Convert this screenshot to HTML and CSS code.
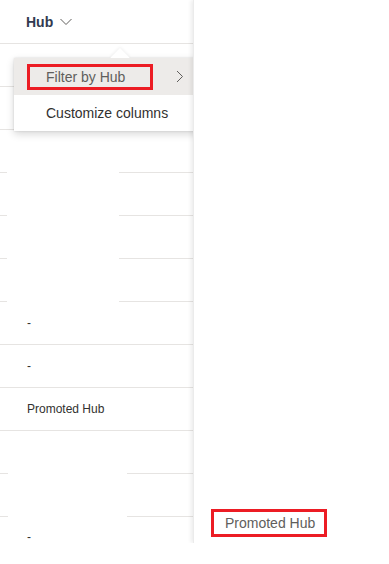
FILE: index.html
```html
<!DOCTYPE html>
<html lang="en">
<head>
    <meta charset="UTF-8">
    <meta name="viewport" content="width=device-width, initial-scale=1.0">
    <title>Hub column</title>
    <link rel="stylesheet" href="styles.css">
</head>
<body>
    <div class="page">
        <div class="list">
            <div class="head">
                <span class="title">Hub</span>
                <svg class="down" width="12" height="8" viewBox="0 0 12 8"><path d="M0.5 1 L6 6.5 L11.5 1" fill="none" stroke="#605e5c" stroke-width="1"/></svg>
            </div>
            <div class="row"></div>
            <div class="row"></div>
            <div class="row gap"></div>
            <div class="row gap"></div>
            <div class="row gap"></div>
            <div class="row gap"></div>
            <div class="row">-</div>
            <div class="row">-</div>
            <div class="row">Promoted Hub</div>
            <div class="row gap2"></div>
            <div class="row gap2"></div>
            <div class="row last">-</div>

            <div class="menu">
                <div class="beak"></div>
                <div class="item active">
                    <span class="mark">Filter by Hub</span>
                    <svg class="more" width="8" height="13" viewBox="0 0 8 13"><path d="M1 1 L6.5 6.5 L1 12" fill="none" stroke="#605e5c" stroke-width="1"/></svg>
                </div>
                <div class="item">Customize columns</div>
            </div>
        </div>
        <div class="panel">
            <span class="mark big">Promoted Hub</span>
        </div>
    </div>
</body>
</html>
```

FILE: styles.css
```css
body{
    margin: 0;
    background: #fff;
    font-family: "Liberation Sans", Arial, sans-serif;
    color: #323130;
}
.page{
    display: flex;
    height: 543px;
    overflow: hidden;
}
.list{
    width: 193px;
    position: relative;
    overflow: hidden;
    flex-shrink: 0;
}
.head{
    height: 43px;
    border-bottom: 1px solid #e6e4e2;
    display: flex;
    align-items: center;
    padding-left: 26px;
    gap: 7px;
}
.head .title{
    font-size: 14px;
    font-weight: bold;
    color: #323a50;
}
.head .down{
    margin-top: 1px;
}
.row{
    height: 42px;
    border-bottom: 1px solid #e6e4e2;
    display: flex;
    align-items: center;
    padding-left: 27px;
    font-size: 12px;
    color: #323130;
}
.row.gap{
    border-bottom: 0;
    height: 43px;
    background: linear-gradient(to right, #e6e4e2 7px, transparent 7px, transparent 119px, #e6e4e2 119px) bottom / 100% 1px no-repeat;
}
.row.gap2{
    border-bottom: 0;
    height: 43px;
    background: linear-gradient(to right, #e6e4e2 8px, transparent 8px, transparent 127px, #e6e4e2 127px) bottom / 100% 1px no-repeat;
}
.row.last{
    height: 26px;
    border-bottom: 0;
    align-items: flex-end;
    line-height: 12px;
}
.menu{
    position: absolute;
    left: 14px;
    top: 58px;
    width: 200px;
    background: #fff;
    box-shadow: 0 3px 8px rgba(0, 0, 0, 0.16), 0 0 2px rgba(0, 0, 0, 0.12);
}
.menu .beak{
    position: absolute;
    left: 99px;
    top: -7px;
    width: 14px;
    height: 14px;
    background: #fff;
    transform: rotate(45deg);
    box-shadow: -1px -1px 3px rgba(0, 0, 0, 0.06);
}
.menu .item{
    position: relative;
    height: 36px;
    display: flex;
    align-items: center;
    padding-left: 32px;
    font-size: 14px;
    color: #323130;
    background: #fff;
}
.menu .item.active{
    height: 37px;
    padding-left: 13px;
    background: #edebe9;
    color: #605e5c;
}
.mark{
    display: inline-flex;
    align-items: center;
    box-sizing: border-box;
    border: 3px solid #ec1c24;
}
.menu .mark{
    width: 126px;
    height: 26px;
    padding-left: 16px;
}
.menu .more{
    margin-left: 23px;
}
.panel{
    flex: 1;
    position: relative;
    z-index: 2;
    background: #fff;
    box-shadow: -2px 0 4px rgba(0, 0, 0, 0.08);
    border-left: 1px solid #ebebeb;
    display: flex;
    flex-direction: column;
    justify-content: flex-end;
    align-items: flex-start;
    padding: 0 0 6px 17px;
}
.panel .big{
    width: 116px;
    height: 28px;
    padding-left: 11px;
    font-size: 14px;
    color: #605e5c;
}
```
